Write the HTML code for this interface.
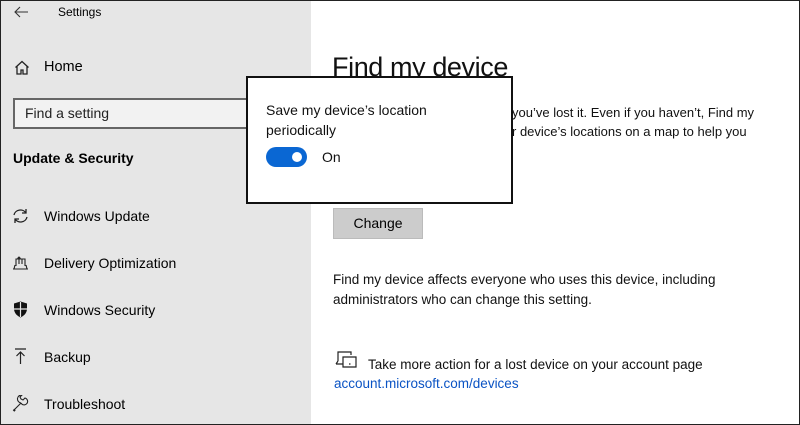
<!DOCTYPE html>
<html><head><style>
*{margin:0;padding:0;box-sizing:border-box}
body{width:800px;height:425px;overflow:hidden;font-family:"Liberation Sans",sans-serif;background:#fff;position:relative;color:#000}
.frame{position:absolute;left:0;top:0;width:800px;height:425px;border:1px solid #222;z-index:10;pointer-events:none}
.side{position:absolute;left:0;top:0;width:311px;height:425px;background:#e6e6e6}
.t{position:absolute;white-space:nowrap}
.s{font-size:14px}
svg{position:absolute}
</style></head><body>
<div class="side"></div>
<svg style="left:13px;top:6px" width="16" height="12" viewBox="0 0 16 12"><path d="M15 6H2M7 1L2 6l5 5" fill="none" stroke="#333" stroke-width="1.1"/></svg>
<div class="t" style="left:58px;top:5px;font-size:12px">Settings</div>
<svg style="left:14px;top:60px" width="16" height="15" viewBox="0 0 16 15"><path d="M1.5 7.5L8 1.5l6.5 6M3 6v8h4v-4h2v4h4V6" fill="none" stroke="#222" stroke-width="1.3"/></svg>
<div class="t" style="left:44px;top:59px;font-size:14.5px">Home</div>
<div class="t" style="left:13px;top:98px;width:300px;height:31px;border:2px solid #666;background:#f2f2f2"></div>
<div class="t" style="left:25px;top:105px;font-size:14px;color:#222">Find a setting</div>
<div class="t" style="left:13px;top:150px;font-size:14px;font-weight:bold">Update &amp; Security</div>
<svg style="left:12px;top:208px" width="17" height="16" viewBox="0 0 17 16"><path d="M2 7A6.5 6 0 0 1 14 5M15 9A6.5 6 0 0 1 3 11M14 1v4h-4M3 15v-4h4" fill="none" stroke="#222" stroke-width="1.3"/></svg>
<div class="t s" style="left:44px;top:208px">Windows Update</div>
<svg style="left:12px;top:255px" width="17" height="16" viewBox="0 0 17 16"><path d="M1 14h15M2 14l1-4M15 14l-1-4M4 11V4h9v7M7 9V2M5.5 3.5L7 2l1.5 1.5M10 9V4" fill="none" stroke="#222" stroke-width="1.1"/></svg>
<div class="t s" style="left:44px;top:255px">Delivery Optimization</div>
<svg style="left:13px;top:301px" width="15" height="17" viewBox="0 0 15 17"><path d="M7.5 0.5L14 2.5v5c0 5-3.5 7.5-6.5 9C4.5 15 1 12.5 1 7.5v-5z" fill="#111"/><path d="M7.5 1v15M1 8h13" stroke="#e6e6e6" stroke-width="1.2"/></svg>
<div class="t s" style="left:44px;top:302px">Windows Security</div>
<svg style="left:14px;top:348px" width="13" height="17" viewBox="0 0 13 17"><path d="M1 1h11M6.5 4v12M2.5 8l4-4 4 4" fill="none" stroke="#222" stroke-width="1.2"/></svg>
<div class="t s" style="left:44px;top:349px">Backup</div>
<svg style="left:12px;top:395px" width="17" height="17" viewBox="0 0 17 17"><path d="M2 15l7-7M9 8a3.5 3.5 0 1 0 4-5l-2 2-2-1-1-2 2-2a3.5 3.5 0 0 0-1 8" fill="none" stroke="#222" stroke-width="1.1"/><path d="M1.5 14.5l1.5 1.5" stroke="#222" stroke-width="2"/></svg>
<div class="t s" style="left:44px;top:396px">Troubleshoot</div>

<div class="t" style="left:332px;top:52px;font-size:27px;font-weight:300;color:#111;letter-spacing:-0.4px">Find my device</div>
<div class="t" style="left:512px;top:105px;font-size:13px;color:#111">you’ve lost it. Even if you haven’t, Find my</div>
<div class="t" style="left:512px;top:124px;font-size:13px;color:#111">r device’s locations on a map to help you</div>
<div class="t" style="left:333px;top:208px;width:90px;height:31px;background:#ccc;border:1px solid #bbb;font-size:14px;text-align:center;line-height:29px">Change</div>
<div class="t" style="left:333px;top:270px;font-size:13.5px;line-height:20px;color:#111">Find my device affects everyone who uses this device, including<br>administrators who can change this setting.</div>
<svg style="left:335px;top:351px" width="22" height="18" viewBox="0 0 22 18"><path d="M3 10V1h13v3M1 13h7M1 13l2-3M8 6h13v10H8zM14 13h1.5" fill="none" stroke="#222" stroke-width="1.2"/></svg>
<div class="t" style="left:368px;top:357px;font-size:13.5px;color:#111">Take more action for a lost device on your account page</div>
<div class="t" style="left:334px;top:376px;font-size:13.5px;color:#0a53c4">account.microsoft.com/devices</div>

<div class="t" style="left:246px;top:76px;width:267px;height:128px;background:#fff;border:2px solid #111"></div>
<div class="t" style="left:266px;top:100px;font-size:14px;line-height:20px;color:#111">Save my device’s location<br>periodically</div>
<div class="t" style="left:266px;top:147px;width:41px;height:20px;border-radius:10px;background:#0a67d3"></div>
<div class="t" style="left:292px;top:152px;width:10px;height:10px;border-radius:50%;background:#fff"></div>
<div class="t" style="left:322px;top:149px;font-size:14px;color:#111">On</div>
<div class="frame"></div>
</body></html>
